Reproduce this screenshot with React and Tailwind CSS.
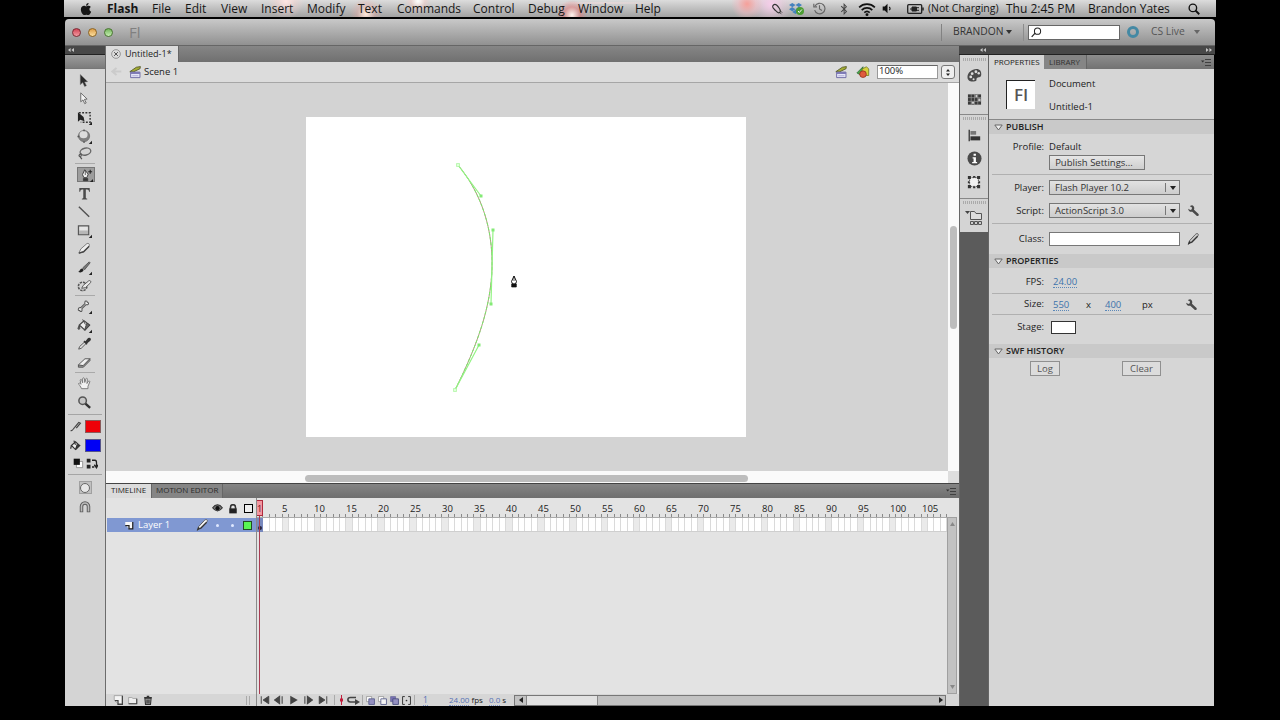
import React from "react";
import { FaApple, FaDropbox, FaBluetoothB } from "react-icons/fa";

const Ic = ({ s = 16, children, className = "" }) => (
  <svg width={s} height={s} viewBox="0 0 16 16" fill="none" className={"shrink-0 " + className}>
    {children}
  </svg>
);

/* ---------- shared icons ---------- */
const Clapper = () => (
  <Ic s={13}>
    <path d="M1 7 9 1.500l5-.8-.4 2.600L5 7.500z" fill="#a4ad35" stroke="#4d5320" strokeWidth="1" />
    <path d="M2 7.500h11.500v6.800H2z" fill="#e6e6f8" stroke="#6763a0" strokeWidth="1.100" />
    <path d="M2 7.400h11.500v2.400H2z" fill="#7d79b5" />
    <path d="M4 12h7.500" stroke="#a5a2d0" />
  </Ic>
);
const Symbols = () => (
  <Ic s={14}>
    <path d="M1 9 8 2v11z" fill="#46a84a" stroke="#22602a" strokeWidth=".8" />
    <path d="M7 4.500 12 2l2.500 2.500V12H7z" fill="#d5d03c" stroke="#667016" strokeWidth=".8" />
    <circle cx="8" cy="10.500" r="3.800" fill="#df5b3d" stroke="#8b2717" strokeWidth=".8" />
  </Ic>
);
const Wrench = () => (
  <Ic s={13}>
    <path d="M6.500 1.500a4.200 4.200 0 0 0-3 1.300l2.600 1.600-.2 2-1.800 1-2.600-1.700c0 3 2.500 4.400 5 3.700l5.700 5.300c1.600.8 3-.8 2-2.300L8.600 7.200c1-2.600 0-5-2.100-5.700z" fill="#4a4a4a" />
  </Ic>
);
const Pencil = ({ light }) => (
  <Ic s={14}>
    <path d="M2.500 14 4 10 10.500 3c1-1.300 2.800-1.700 3.400-.6.5 1-.1 2-1 3L6 12z" fill={light ? "#f4f4f4" : "#c9c9c9"} stroke={light ? "#555" : "#555"} strokeWidth="1" />
    <path d="M2 14.500 4 10l2 2z" fill="#333" />
    <path d="m6 12.200 7.300-7.400" stroke="#333" strokeWidth="1.500" />
  </Ic>
);
const MenuGlyph = () => (
  <svg width="10" height="7" viewBox="0 0 10 7" className="shrink-0">
    <path d="M0 1.500h3.400L1.700 3.600z" fill="#333" />
    <path d="M4 .5h6M4 3.500h6M4 6.500h6" stroke="#404040" strokeWidth="1" />
  </svg>
);
const Collapse = ({ flip }) => (
  <svg width="6" height="4" viewBox="0 0 6 4" className={flip ? "rotate-180" : ""}>
    <path d="M2.600 0v4L0 2zM6 0v4L3.400 2z" fill="#c8c8c8" />
  </svg>
);

/* ---------- toolbox ---------- */
const corner = <path d="M16 12.500V16h-3.500z" fill="#222" />;
const tools = [
  ["h-[18px]", <path d="M3.500 1.500v11l2.600-2.300 2 4.300 2-1-2-4 3.300-.3z" fill="#2a2a2a" stroke="#777" strokeWidth=".5" />],
  ["h-[19px]", <path d="M4 2v9.500l2.400-2 1.800 4 1.600-.8-1.900-3.800 2.900-.3z" fill="#f2f2f2" stroke="#666" strokeWidth="1" />],
  ["h-[19px]", <><path d="M1 2.500v10l2.500-2.200L8 12 7 7.500z" fill="#222" /><path d="M2 3h12v10H4" stroke="#333" strokeWidth="1.500" strokeDasharray="2 1.500" />{corner}</>],
  ["h-[18px]", <><circle cx="7.500" cy="7.500" r="6" fill="#808080" stroke="#666" strokeWidth=".7" /><ellipse cx="7" cy="6" rx="4.300" ry="3.800" fill="#dcdcdc" /><path d="M7.500 .5v2M7.500 13v2M.5 8h2" stroke="#555" strokeWidth="1.400" />{corner}</>],
  ["h-[17px]", <><ellipse cx="9" cy="6" rx="5.800" ry="3.700" transform="rotate(-14 9 6)" stroke="#666" strokeWidth="1.400" /><path d="M5 8.500c-2 0-3.300 1.200-2.600 2.200.8.9 2.600 0 2-1M3 11l2.200 3" stroke="#555" strokeWidth="1.300" /></>],
  ["sep"],
  ["h-[19px]", <><path d="M6.500 2 4 7.500 5.500 11h3.500L10.500 7z" fill="#eee" stroke="#333" strokeWidth="1" /><path d="M7.200 3v5M5 12h5v2.500H5z" fill="#333" stroke="#333" strokeWidth=".8" /><path d="M12.800 2v4.500M10.600 4.200H15" stroke="#222" strokeWidth="1.200" />{corner}</>, true],
  ["h-[18px]", <path d="M2.500 2h11l.3 4h-.9c-.3-1.600-.9-2.300-2.200-2.300H9.400v8.600c0 .9.400 1.100 1.500 1.200v.8H5.200v-.8c1.200-.1 1.500-.3 1.500-1.200V3.700H5.500c-1.300 0-1.800.7-2.100 2.300h-1z" fill="#4a4a4a" />],
  ["h-[19px]", <path d="m2 3 11 10.500" stroke="#505050" strokeWidth="1.500" />],
  ["h-[18px]", <><path d="M1.500 3h11v9.500h-11z" fill="#b7b7b7" stroke="#555" strokeWidth="1.200" /><path d="M2.500 4h9v4h-9z" fill="#e5e5e5" />{corner}</>],
  ["h-[19px]", <><path d="m2 13 2-4.500 6.500-5.700c1.500-1 3.500.6 2.500 2.400L7 11.500z" fill="#eee" stroke="#777" strokeWidth="1" /><path d="m2 13 5-1.500 6-6" stroke="#444" strokeWidth="1.500" /></>],
  ["h-[18px]", <><path d="m6 8.500 7-6.500 1 1-6 7.500z" fill="#777" stroke="#555" strokeWidth="1" /><path d="M1 12.500c2 0 2-3.500 4.500-3.500l1.500 1.500c0 2.500-3 3.500-6 2z" fill="#222" />{corner}</>],
  ["h-[18px]", <><circle cx="6" cy="9" r="4.500" stroke="#555" strokeWidth="1.700" strokeDasharray="2.500 1" /><path d="M5 11 6.500 8l6-5c1.500-.8 2.800.5 2 2L9 10.300z" fill="#e9e9e9" stroke="#555" strokeWidth="1" /></>],
  ["sep"],
  ["h-[19px]", <><path d="M1.500 10.500c-.7 1.500.8 2 1.500 1.700 0 1.400 2.200 1.700 2.300 0 .2-1-.2-1.400 0-2L9.700 6c1 .5 2.600.2 2.600-1.300 0-.8-.7-1.200-1.300-1.200 0-1.500-2.300-1.900-2.600-.3-.2.9.2 1.300 0 1.800L4 9.300c-.8-.4-2.200-.1-2.500 1.200z" fill="#efefef" stroke="#555" strokeWidth="1.100" />{corner}</>],
  ["h-[18px]", <><path d="m2.500 7.500 5-4.500 6 4.500-5 5.500z" fill="#ededed" stroke="#444" strokeWidth="1.200" /><path d="M6 1.500 9 7M2.500 7.500 1 11c0 1.500 2 1.500 2 0zM8 13l5.500-5.500-3-2z" fill="#666" stroke="#444" />{corner}</>],
  ["h-[19px]", <><path d="m1.800 14 1-2.800L8.500 6l1.600 1.600-5.600 5.500z" fill="#ddd" stroke="#555" /><path d="m7.500 5.500 3.200 3.300M9.500 6.500 12 3.200c1.200-1.400 2.700 0 1.600 1.300L10.500 7z" stroke="#333" strokeWidth="1.700" fill="#333" /></>],
  ["h-[18px]", <><path d="M1.500 10.500 8.500 4h5.300l-7 7.500H2z" fill="#efefef" stroke="#555" /><path d="M1.500 10.500V13h5.300l7-7V4L6.500 11.300z" fill="#999" stroke="#555" /></>],
  ["sep"],
  ["h-[19px]", <path d="M4.800 13.500C4 11 2 9.500 1.600 8c.6-.9 1.700-.3 2.600.8L3.400 4.500c.2-1.200 1.500-1 1.700 0L6 7.200 6 2.800c.2-1.200 1.700-1.200 1.900 0l.4 4.100L9.500 3c.5-1 1.700-.6 1.600.4L10.600 8l1.600-2.500c.8-.8 1.700-.1 1.400.9L11.700 11v2.500z" fill="#f1f1f1" stroke="#777" strokeWidth="1" />],
  ["h-[18px]", <><circle cx="6" cy="6" r="4" fill="#c6c6c6" stroke="#555" strokeWidth="1.600" /><path d="m9 9.200 5 4.500" stroke="#333" strokeWidth="2.600" /></>],
];

const Toolbox = () => (
  <div className="flex w-[41px] shrink-0 flex-col border-r border-[#6c6c6c] bg-[#d4d4d4]">
    <div className="flex h-[9px] items-center border-b border-[#222] bg-[#484848] pl-[3px]"><Collapse /></div>
    <div className="h-[14px] border-b border-[#777] bg-linear-to-b from-[#9c9c9c] to-[#7c7c7c]" />
    <div className="flex flex-col items-center pt-[2px]">
      {tools.map(([h, d, sel], i) =>
        h === "sep" ? (
          <div key={i} className="flex h-[3px] w-5 items-center"><div className="h-px w-full bg-[#a9a9a9]" /></div>
        ) : (
          <div key={i} className={"flex w-full items-center justify-center pr-px " + h}>
            {sel ? (
              <div className="ml-[2px] flex h-[15px] w-[18px] items-center justify-center border border-[#777] bg-[#9d9d9d]"><Ic s={14}>{d}</Ic></div>
            ) : (
              <Ic s={15}>{d}</Ic>
            )}
          </div>
        )
      )}
    </div>
    <div className="mx-[3px] mt-[3px] h-px bg-[#a5a5a5]" />
    <div className="flex h-[21px] items-center gap-[3px] pt-[2px] pl-[4px]">
      <Ic s={13}><path d="M2 13c2 1 4-3 5-4l5-6 2 1-5 6" stroke="#444" strokeWidth="1.500" /></Ic>
      <div className="h-[13px] w-[16px] border border-[#8a5a5a] bg-[#ee0008]" />
    </div>
    <div className="flex h-[19px] items-center gap-[3px] pl-[4px]">
      <Ic s={13}><path d="m3 8 5-4.500L13 8l-5 5z" fill="#eee" stroke="#333" strokeWidth="1.400" /><path d="M6 2l2 5M3 8l-1 4M8 13l5-5-3-1z" stroke="#333" strokeWidth="1.400" fill="#444" /></Ic>
      <div className="h-[13px] w-[16px] border border-[#55558a] bg-[#0000f5]" />
    </div>
    <div className="flex h-[17px] items-center gap-[2px] pl-[8px]">
      <Ic s={11}><path d="M5 5h9v9H5z" fill="#fff" stroke="#777" /><path d="M1 1h9v9H1z" fill="#111" /></Ic>
      <Ic s={12}><path d="M1 1h5v5H1zM1 9h5v5H1z" fill="#222" /><path d="M8 3h4c2 0 2 2 2 3v5M11 9l3 4 2-4M8 12h3" stroke="#222" strokeWidth="1.700" /></Ic>
    </div>
    <div className="mx-[3px] mt-[2px] h-px bg-[#a5a5a5]" />
    <div className="flex h-[25px] items-center justify-center">
      <div className="flex h-[13px] w-[13px] items-center justify-center border border-[#a0a0a0] bg-[#c0c0c0]">
        <div className="h-[10px] w-[10px] rounded-full border border-[#666] bg-[#e7e7e7]" />
      </div>
    </div>
    <div className="flex h-[13px] items-center justify-center pr-px">
      <Ic s={14}><path d="M4 14V7.500a4 4 0 0 1 8 0V14" stroke="#5c5c5c" strokeWidth="4" /><path d="M4 13V7.500a4 4 0 0 1 8 0V13" stroke="#bbb" strokeWidth="1.800" /></Ic>
    </div>
  </div>
);

/* ---------- mac menu bar ---------- */
const menus = [
  ["File", "w-[33px]"], ["Edit", "w-[36px]"], ["View", "w-[40px]"], ["Insert", "w-[46px]"], ["Modify", "w-[51px]"],
  ["Text", "w-[39px]"], ["Commands", "w-[76px]"], ["Control", "w-[55px]"], ["Debug", "w-[50px]"], ["Window", "w-[57px]"], ["Help", "w-[136px]"],
];
const MenuBar = () => (
  <div className="ml-[64px] flex h-[17px] w-[1152px] items-center overflow-hidden bg-[radial-gradient(circle_at_302px_14px,#ffe9dc_0,#f6a9a055_9px,transparent_16px),radial-gradient(circle_at_508px_15px,#fff4ee_0,#f0707077_8px,transparent_15px),radial-gradient(ellipse_at_540px_3px,#fff6_0,#ffdfe066_22px,transparent_60px),radial-gradient(circle_at_683px_4px,#f6a09a_0,#f4b9c088_9px,transparent_16px),radial-gradient(circle_at_707px_4px,#f6cdea_0,#f0c8e066_12px,transparent_22px),radial-gradient(circle_at_354px_1px,#fff_0,#ffc9c266_7px,transparent_13px),radial-gradient(circle_at_222px_1px,#ffe5e2_0,#ffd4d066_9px,transparent_18px),radial-gradient(ellipse_at_800px_12px,#eef6f0_0,#e4ece699_20px,transparent_34px),linear-gradient(#dcdcdc,#a2a2a2)] text-[12px] leading-[17px] whitespace-nowrap text-[#161616]">
    <div className="flex w-[43px] shrink-0 pl-[15px]"><FaApple size={14} /></div>
    <span className="w-[45px] shrink-0 font-bold">Flash</span>
    {menus.map(([t, w]) => <span key={t} className={"shrink-0 " + w}>{t}</span>)}
    <div className="flex w-[18px] shrink-0"><Ic s={12}><path d="M3 3c3-3 6 1 8 4s2 5 0 6-4-2-6-4-4-4-2-6z" stroke="#333" strokeWidth="1.500" /><path d="m11 12 3 3M12 10l3 3" stroke="#333" /></Ic></div>
    <div className="relative flex w-[24px] shrink-0"><FaDropbox size={13} color="#4382bd" />
      <span className="absolute top-[5px] left-[7px] flex h-2 w-2 items-center justify-center rounded-full bg-[#4c9d34]"><Ic s={6}><path d="m3 8 3 4 7-8" stroke="#fff" strokeWidth="2.500" /></Ic></span>
    </div>
    <div className="flex w-[25px] shrink-0"><Ic s={13}><path d="M2.500 5A6.500 6.500 0 1 1 2 10" stroke="#666" strokeWidth="1.400" /><path d="M1 2v4h4M8 4v4.500l3 2" stroke="#666" strokeWidth="1.400" /></Ic></div>
    <div className="flex w-[20px] shrink-0"><FaBluetoothB size={12} color="#444" /></div>
    <div className="flex w-[24px] shrink-0"><Ic s={18}><path d="M1 6.500a10 10 0 0 1 14 0M3.300 9a6.700 6.700 0 0 1 9.400 0M5.600 11.300a3.500 3.500 0 0 1 4.800 0" stroke="#111" strokeWidth="1.500" /><circle cx="8" cy="13" r="1.300" fill="#111" /></Ic></div>
    <div className="flex w-[25px] shrink-0"><Ic s={11}><path d="M1 5h3l4-4v14l-4-4H1z" fill="#111" /><path d="M10.500 5.500c1.500 1.500 1.500 3.500 0 5" stroke="#111" strokeWidth="1.500" /></Ic></div>
    <div className="flex w-[21px] shrink-0">
      <svg width="18" height="10" viewBox="0 0 18 10"><rect x=".7" y=".7" width="14" height="8.600" rx="1" fill="none" stroke="#222" strokeWidth="1.300" /><path d="M16 3.500v3" stroke="#222" strokeWidth="1.500" /><path d="M3 5h2V3h4.500v4H5V5M9 3.700h3M9 6.300h3" fill="#222" stroke="#222" /></svg>
    </div>
    <span className="w-[78px] shrink-0 text-[10.500px]">(Not Charging)</span>
    <span className="w-[82px] shrink-0">Thu 2:45 PM</span>
    <span className="w-[100px] shrink-0">Brandon Yates</span>
    <Ic s={12}><circle cx="6.500" cy="6.500" r="5" stroke="#111" strokeWidth="1.800" /><path d="m10 10 5 5" stroke="#111" strokeWidth="2.400" /></Ic>
  </div>
);

/* ---------- application title bar ---------- */
const TitleBar = () => (
  <div className="flex h-[27px] shrink-0 items-center rounded-t-[4px] border-b border-[#666] bg-linear-to-b from-[#c9c9c9] to-[#919191] pl-[7px] text-[#333]">
    <div className="flex w-[57px] gap-[7px]">
      <div className="h-[9px] w-[9px] rounded-full border border-[#7c2a33] bg-linear-to-b from-[#cf4156] to-[#f39aa2]" />
      <div className="h-[9px] w-[9px] rounded-full border border-[#8d6422] bg-linear-to-b from-[#dc9d45] to-[#fbe0a0]" />
      <div className="h-[9px] w-[9px] rounded-full border border-[#48752f] bg-linear-to-b from-[#72b45a] to-[#c8f0b4]" />
    </div>
    <span className="w-[812px] pb-[1px] text-[15px] leading-[16px] text-[#808080]">Fl</span>
    <div className="h-[17px] w-[12px] border-l border-[#828282]" />
    <span className="w-[53px] text-[10.300px] whitespace-nowrap">BRANDON</span>
    <svg width="6" height="4" viewBox="0 0 6 4"><path d="M0 0h6L3 4z" fill="#333" /></svg>
    <div className="ml-[11px] h-[17px] w-[5px] border-l border-[#8c8c8c]" />
    <div className="flex h-[15px] w-[92px] items-center border border-[#666] bg-white pl-[2px]">
      <Ic s={11}><circle cx="9.500" cy="6" r="4.500" stroke="#222" strokeWidth="1.500" /><path d="m6 9-5 5.500" stroke="#222" strokeWidth="1.700" /></Ic>
    </div>
    <div className="ml-[7px] h-[12px] w-[12px] rounded-full border-[3px] border-[#4489a4]" />
    <span className="ml-[12px] w-[43px] text-[10.300px] whitespace-nowrap text-[#555]">CS Live</span>
    <svg width="6" height="4" viewBox="0 0 6 4"><path d="M0 0h6L3 4z" fill="#666" /></svg>
  </div>
);

/* ---------- document window ---------- */
const DocumentView = () => (
  <>
    <div className="flex h-[16px] shrink-0 bg-linear-to-b from-[#868686] to-[#707070]">
      <div className="flex w-[73px] items-center gap-[4px] border-r border-[#666] bg-[#dcdcdc] pl-[5px] text-[9px] whitespace-nowrap">
        <Ic s={10}><circle cx="8" cy="8" r="7" stroke="#888" strokeWidth="1.300" /><path d="m5 5 6 6m0-6-6 6" stroke="#555" strokeWidth="1.600" /></Ic>
        Untitled-1*
      </div>
    </div>
    <div className="flex h-[21px] shrink-0 items-center border-b border-[#a6a6a6] bg-[#dcdcdc]">
      <div className="flex w-[23px] justify-center pr-[3px] pb-[1px]"><Ic s={11}><path d="M15 8H3m5-5L2 8l6 5" stroke="#cbcbcb" strokeWidth="3" /></Ic></div>
      <Clapper />
      <span className="ml-[2px] flex-1 text-[9.500px]">Scene 1</span>
      <Clapper />
      <div className="ml-[8px]"><Symbols /></div>
      <div className="ml-[7px] flex h-[14px] w-[61px] items-center border border-[#999] border-t-[#666] bg-white pb-[1px] pl-[1px] text-[9.500px]">100%</div>
      <div className="mr-[4px] ml-[3px] flex h-[14px] w-[14px] items-center justify-center rounded-[3px] border border-[#777] bg-[#efefef]">
        <svg width="4" height="7" viewBox="0 0 4 7"><path d="M0 2.500h4L2 0zM0 4.500h4L2 7z" fill="#222" /></svg>
      </div>
    </div>
    <div className="flex h-[388px] shrink-0">
      <div className="w-[842px] bg-[#d3d3d3] pt-[34px] pl-[200px]">
        <div className="h-[320px] w-[440px] bg-white">
          <svg width="440" height="320" viewBox="306 117 440 320" fill="none">
            <path d="M458 165C482 194 493 230 492 268S478 344 455 390" stroke="#b09a80" strokeWidth="1" />
            <path d="M458 165C482 194 493 230 492 268S478 344 455 390" stroke="#7be86a" strokeWidth="1" strokeDasharray="3 2" />
            <path d="m458 165 23 31M493 230l-2 74M455 390l24-45" stroke="#93f484" strokeWidth="1.200" />
            <path d="M479.500 194.500h3v3h-3zM491.500 228.500h3v3h-3zM489.500 302.500h3v3h-3zM477.500 343.500h3v3h-3z" fill="#84ea76" />
            <path d="M456.500 163.500h3v3h-3zM453.500 388.500h3v3h-3z" fill="#dfffd8" stroke="#a8f59c" strokeWidth=".7" />
            <path d="m514 276-2.500 5.500 1 2.500h3l1-2.500z" fill="#fff" stroke="#111" strokeWidth="1" />
            <path d="M514 276v5M511.700 284h4.600v3h-4.600z" fill="#111" stroke="#111" strokeWidth=".7" />
          </svg>
        </div>
      </div>
      <div className="w-[11px] bg-[#fafafa] pt-[143px] pl-[2px]"><div className="h-[103px] w-[7px] rounded-full bg-[#bdbdbd]" /></div>
    </div>
    <div className="flex h-[12px] shrink-0 bg-[#fafafa]">
      <div className="w-[842px] pt-[4px] pl-[199px]"><div className="h-[7px] w-[443px] rounded-full bg-[#bdbdbd]" /></div>
      <div className="flex-1 bg-[#dedede]" />
    </div>
  </>
);

/* ---------- timeline ---------- */
const frames = Array.from({ length: 108 }, (_, i) => i + 1);
const labels = Array.from({ length: 21 }, (_, i) => (i + 1) * 5);

const playback = [
  ["w-[14px]", <path d="M2 2v12M14 2v12L5 8z" fill="#444" stroke="#444" strokeWidth="1.500" />],
  ["w-[15px]", <path d="M9 2v12L1 8zM13 2v12" fill="#444" stroke="#444" strokeWidth="1.700" />],
  ["w-[14px]", <path d="M2 1v14l12-7z" fill="#444" />],
  ["w-[15px]", <path d="M7 2v12l8-6zM3 2v12" fill="#444" stroke="#444" strokeWidth="1.700" />],
  ["w-[16px]", <path d="M14 2v12M2 2v12l9-6z" fill="#444" stroke="#444" strokeWidth="1.500" />],
];

const Timeline = () => (
  <div className="flex flex-1 flex-col bg-[#e3e3e3]">
    <div className="flex h-[15px] shrink-0 items-stretch border-t border-[#444] bg-linear-to-b from-[#858585] to-[#6e6e6e] text-[8px] leading-[12px] whitespace-nowrap">
      <div className="w-[45px] bg-[#dcdcdc] pl-[5px]">TIMELINE</div>
      <div className="w-[72px] border-x border-[#666] bg-[#858585] pl-[4px] text-[#2b2b2b]">MOTION EDITOR</div>
      <div className="flex flex-1 items-center justify-end pr-[3px]"><MenuGlyph /></div>
    </div>
    <div className="flex h-[196px] shrink-0">
      <div className="w-[151px] shrink-0 border-r border-[#8a8a8a]">
        <div className="flex h-[20px] items-center pt-[1px] pl-[106px]">
          <div className="flex w-[16px]"><Ic s={11}><path d="M1 7c4-6 10-6 14 0-4 6-10 6-14 0z" fill="#777" stroke="#333" strokeWidth="1.500" /><circle cx="8" cy="7.500" r="3" fill="#111" /></Ic></div>
          <div className="flex w-[16px]"><Ic s={10}><path d="M2 7h12v8H2z" fill="#222" /><path d="M4 8V5a4 4 0 0 1 8 0v3" stroke="#333" strokeWidth="2.500" /></Ic></div>
          <div className="h-[9px] w-[9px] border-[1.500px] border-black bg-[#eee]" />
        </div>
        <div className="ml-[1px] flex h-[14px] items-center bg-[#8098d2] pl-[17px] text-white">
          <Ic s={10}><path d="M2 3h12v11H8L2 8z" fill="#f8f8f8" /><path d="M14 3v11H8V9H2" stroke="#222" strokeWidth="2" /></Ic>
          <span className="ml-[4px] w-[57px] text-[9.500px] leading-[14px] font-medium">Layer 1</span>
          <Pencil light />
          <div className="ml-[7px] h-[3px] w-[3px] rounded-full bg-[#dfe8ff]" />
          <div className="ml-[12px] h-[3px] w-[3px] rounded-full bg-[#dfe8ff]" />
          <div className="ml-[9px] h-[9px] w-[9px] border border-[#234b22] bg-[#58f552]" />
        </div>
      </div>
      <div className="relative w-[690px] shrink-0 overflow-hidden">
        <div className="flex h-[16px] pt-[3px] text-[9.500px] leading-[16px]">
          <span className="w-[25px] shrink-0" />
          {labels.map((n) => <span key={n} className="w-[32px] shrink-0">{n}</span>)}
        </div>
        <div className="flex h-[4px] border-b border-[#aaa]">
          {frames.map((n) => <div key={n} className="w-[6.400px] shrink-0 border-r border-[#8a8a8a]" />)}
        </div>
        <div className="flex h-[14px] border-b border-[#cfcfcf] bg-white">
          {frames.map((n) => <div key={n} className={"w-[6.400px] shrink-0 border-r border-[#dadada] " + (n % 5 === 0 ? "bg-[#eaeaea]" : "bg-white")} />)}
        </div>
        <div className="absolute top-[20px] left-0 flex h-[14px] w-[6px] items-end justify-center bg-[#7788bd] pb-[2px]"><div className="h-[4px] w-[4px] rounded-full bg-[#2b2440]" /></div>
        <div className="absolute top-[17px] left-[2px] h-[180px] w-px bg-[#a93c52]" />
        <div className="absolute top-[2px] left-[-1px] h-[16px] w-[7px] border border-[#b02a3e] bg-[#f58590]/80 text-center text-[9px] leading-[15px] text-[#701020]">1</div>
      </div>
      <div className="flex w-[10px] shrink-0 flex-col pt-[19px]">
        <div className="flex flex-1 flex-col items-center justify-between border border-[#a0a0a0] bg-[#c2c2c2] py-[4px]">
          <svg width="5" height="4" viewBox="0 0 5 4"><path d="M0 4h5L2.500 0z" fill="#888" /></svg>
          <svg width="5" height="4" viewBox="0 0 5 4"><path d="M0 0h5L2.500 4z" fill="#888" /></svg>
        </div>
      </div>
    </div>
    <div className="flex flex-1 items-center bg-[#d6d6d6] pb-[1px] text-[8.500px] leading-[12px] whitespace-nowrap">
      <div className="flex w-[140px] items-center gap-[5px] pl-[7px]">
        <Ic s={10}><path d="M2 1h13v13H8L2 8z" fill="#f4f4f4" stroke="#888" /><path d="M15 1v14H8V9H3" stroke="#444" strokeWidth="2" /></Ic>
        <Ic s={10}><path d="M1 4h5l2 1.500h6V14H1z" fill="#efefef" stroke="#888" /><path d="M1 14h13V6" stroke="#444" strokeWidth="1.700" /></Ic>
        <Ic s={10}><path d="M3 5h10l-1 10H4z" fill="#aaa" stroke="#333" strokeWidth="1.700" /><path d="M2 4h12M6 2h4M6.500 7v6M9.500 7v6" stroke="#333" strokeWidth="2" /></Ic>
      </div>
      <div className="h-[9px] w-[4px] border-x border-[#aaa]" />
      <div className="ml-[6px] h-full w-px bg-[#8a8a8a]" />
      <div className="flex items-center pl-[3px]">
        {playback.map(([w, d], i) => <div key={i} className={"flex shrink-0 " + w}><Ic s={10}>{d}</Ic></div>)}
        <div className="h-[10px] w-[5px] border-l border-[#aaa]" />
        <div className="flex w-[8px]"><svg width="5" height="10" viewBox="0 0 5 10"><path d="M2.500 0v10" stroke="#c11f3c" /><path d="M2.500 3.500v3" stroke="#c11f3c" strokeWidth="3" /></svg></div>
        <div className="flex w-[15px]"><svg width="13" height="9" viewBox="0 0 13 9"><path d="M9 1.500H3.500C0 1.500 0 6 3.500 6H9" fill="none" stroke="#444" strokeWidth="1.600" /><path d="M8 3v6l5-3z" fill="#444" /></svg></div>
        <div className="h-[10px] w-[4px] border-l border-[#aaa]" />
        <div className="flex w-[12px]"><Ic s={9}><path d="M1 1h9v9H1z" fill="#fff" stroke="#777" /><path d="M5 5h10v10H5z" fill="#9490c0" stroke="#555a88" strokeWidth="1.500" /></Ic></div>
        <div className="flex w-[12px]"><Ic s={9}><path d="M1 1h9v9H1z" fill="#fff" stroke="#777" /><path d="M5 5h10v10H5z" fill="#f4f4f4" stroke="#555a88" strokeWidth="1.500" /></Ic></div>
        <div className="flex w-[12px]"><Ic s={9}><path d="M1 1h9v9H1z" fill="#7a72b5" stroke="#555a88" /><path d="M5 5h10v10H5z" fill="#9490c0" stroke="#44497a" strokeWidth="1.500" /></Ic></div>
        <div className="flex w-[12px]"><Ic s={9}><path d="M5 1H1v14h4M11 1h4v14h-4" stroke="#333" strokeWidth="1.700" /><circle cx="8" cy="8" r="1.500" fill="#333" /></Ic></div>
        <div className="h-[10px] w-[9px] border-l border-[#aaa]" />
        <span className="w-[26px] text-[#5571b5]"><span className="border-b border-dotted border-[#7f95c8] leading-[9px]">1</span></span>
        <span className="w-[40px] text-[8px]"><span className="border-b border-dotted border-[#7f95c8] text-[#5571b5]">24.00</span> fps</span>
        <span className="text-[8px]"><span className="border-b border-dotted border-[#7f95c8] text-[#5571b5]">0.0</span> s</span>
      </div>
      <div className="mr-[13px] ml-auto flex h-[11px] w-[432px] border border-[#777] bg-[#c2c2c2]">
        <div className="flex w-[12px] items-center justify-center border-r border-[#888]"><svg width="4" height="6" viewBox="0 0 4 6"><path d="M4 0v6L0 3z" fill="#222" /></svg></div>
        <div className="w-[71px] border-r border-[#888] bg-[#e2e2e2]" />
        <div className="flex flex-1 items-center justify-end pr-[2px]"><svg width="4" height="6" viewBox="0 0 4 6"><path d="M0 0v6l4-3z" fill="#222" /></svg></div>
      </div>
    </div>
  </div>
);

/* ---------- icon dock ---------- */
const Grip = () => (
  <div className="mx-auto h-[3px] w-[23px] shrink-0 bg-[repeating-linear-gradient(90deg,#aaa_0_1px,transparent_1px_2px)]" />
);
const Dock = () => (
  <div className="flex w-[30px] shrink-0 flex-col border-x border-[#666] bg-[#5b5b5b]">
    <div className="flex h-[60px] flex-col items-center border-b border-[#888] bg-[#d4d4d4] pt-[3px]">
      <Grip />
      <div className="flex h-[29px] items-center"><Ic s={15}><path d="M10 1C5 1 .5 5 .5 9.500s4 5.500 8 4.500c3 0 .5-2.500 2.500-3.500s4 0 4.200-3.500S14 1 10 1z" fill="#4a4a4a" /><circle cx="9.500" cy="4" r="1.500" fill="#ddd" /><circle cx="5.500" cy="6" r="1.500" fill="#ddd" /><circle cx="4" cy="9.500" r="1.500" fill="#ddd" /><circle cx="12.500" cy="5.500" r="1.300" fill="#ddd" /><circle cx="7" cy="12" r="1.100" fill="#ddd" /></Ic></div>
      <div className="flex h-[18px] items-center"><Ic s={15}><path d="M1 2.500h14v11H1z" fill="#3a3a3a" /><path d="M1 6h14M1 10h14M4.500 2v12M8 2v12M11.500 2v12" stroke="#999" strokeWidth=".7" /><path d="M9 3h2v2.500H9zM12 7h2.500v2.500H12zM5 10.500h2.500v2H5z" fill="#ccc" /></Ic></div>
    </div>
    <div className="flex h-[84px] flex-col items-center border-b border-[#888] bg-[#d4d4d4]">
      <div className="h-[2px]" />
      <Grip />
      <div className="flex h-[26px] items-center pt-[5px]"><Ic s={13}><path d="M1.500 1v14" stroke="#333" strokeWidth="1.600" /><path d="M3 2.500h7v4.500H3z" fill="#777" /><path d="M3 9h12v5H3z" fill="#333" /></Ic></div>
      <div className="flex h-[24px] items-center"><Ic s={15}><circle cx="8" cy="8" r="7.500" fill="#4a4a4a" /><path d="M7 3h2.500v2H7zM6 6.700h3.500v5h1.300V13H5.500v-1.300H7V8H6z" fill="#fff" /></Ic></div>
      <div className="flex h-[24px] items-center"><Ic s={14}><path d="M3 3h10v10H3z" fill="#f2f2f2" stroke="#444" strokeDasharray="2 1" /><path d="M1 1h3.500v3.500H1zM11.500 1H15v3.500h-3.500zM1 11.500h3.500V15H1zM11.500 11.500H15V15h-3.500zM7 1h2.500v2H7zM7 13h2.500v2H7zM1 7h2v2.500H1zM13 7h2v2.500h-2z" fill="#333" /></Ic></div>
    </div>
    <div className="flex h-[33px] flex-col items-center bg-[#d4d4d4]">
      <div className="h-[2px]" />
      <Grip />
      <svg width="18" height="16" viewBox="0 0 18 16" className="mt-[6px]"><path d="M0 1h5L2.500 4z" fill="#444" /><path d="M5.500 9.500v-8h4l1.500 2h5.500v6z" fill="#ddd" stroke="#555" /><path d="M5.500 11.500h3v3h-3zM9.500 11.500h3v3h-3zM13.500 11.500h3v3h-3z" stroke="#555" fill="#ccc" /></svg>
    </div>
  </div>
);

/* ---------- properties panel ---------- */
const Section = ({ children }) => (
  <div className="flex h-[14px] shrink-0 items-center bg-[#c9c9c9] pb-[1px] pl-[5px] text-[9px] font-semibold text-[#222]">
    <svg width="9" height="7" viewBox="0 0 9 7" className="mt-[2px] mr-[3px]"><path d="M.8 1h7.400L4.500 6z" fill="#eee" stroke="#666" /></svg>
    {children}
  </div>
);
const Label = ({ children }) => <span className="mr-[5px] w-[55px] shrink-0 pb-[1px] text-right">{children}</span>;
const Select = ({ children }) => (
  <div className="flex h-[15px] w-[131px] items-center border border-[#777] bg-linear-to-b from-[#e2e2e2] to-[#cdcdcd] pl-[5px] text-[#333]">
    <span className="flex-1 pb-[1px]">{children}</span>
    <div className="flex h-[9px] w-[14px] items-center justify-center border-l border-[#777]"><svg width="6" height="4" viewBox="0 0 6 4"><path d="M0 0h6L3 4z" fill="#222" /></svg></div>
  </div>
);
const Hot = ({ children, className = "" }) => (
  <span className={"shrink-0 " + className}><span className="inline-block border-b border-dotted border-[#5b88b8] leading-[10px] text-[#3d73ab]">{children}</span></span>
);
const Rule = () => <div className="mr-[2px] ml-[3px] h-px shrink-0 bg-[#b0b0b0]" />;

const Properties = () => (
  <div className="flex w-[225px] shrink-0 flex-col bg-[#d6d6d6] text-[9.500px] leading-[13px] whitespace-nowrap text-[#222]">
    <div className="flex h-[14px] shrink-0 bg-linear-to-b from-[#8e8e8e] to-[#727272] text-[8px] leading-[14px]">
      <div className="w-[55px] bg-[#d6d6d6] pl-[5px]">PROPERTIES</div>
      <div className="w-[43px] border-r border-[#666] bg-[#858585] pl-[5px] text-[#333]">LIBRARY</div>
      <div className="flex flex-1 items-center justify-end pr-[3px]"><MenuGlyph /></div>
    </div>
    <div className="flex h-[51px] shrink-0 border-b border-[#888] pl-[17px]">
      <div className="mt-[11px] flex h-[29px] w-[29px] items-center justify-center border-t border-l border-[#222] bg-white pb-[2px] text-[17px] font-semibold text-[#555]">Fl</div>
      <div className="ml-[14px] flex flex-col gap-[10px] pt-[8px]"><span>Document</span><span>Untitled-1</span></div>
    </div>
    <Section>PUBLISH</Section>
    <div className="h-[40px] shrink-0 pt-[5px]">
      <div className="flex h-[16px] items-center"><Label>Profile:</Label><span className="pb-[1px]">Default</span></div>
      <div className="ml-[60px] flex h-[15px] w-[96px] items-center justify-center border border-[#777] bg-linear-to-b from-[#e6e6e6] to-[#cecece] pr-[6px] pb-[1px] text-[#333]">Publish Settings...</div>
    </div>
    <Rule />
    <div className="h-[48px] shrink-0 pt-[5px]">
      <div className="flex h-[15px] items-center"><Label>Player:</Label><Select>Flash Player 10.2</Select></div>
      <div className="mt-[8px] flex h-[15px] items-center"><Label>Script:</Label><Select>ActionScript 3.0</Select><div className="ml-[7px]"><Wrench /></div></div>
    </div>
    <Rule />
    <div className="h-[30px] shrink-0 pt-[8px]">
      <div className="flex h-[14px] items-center"><Label>Class:</Label><div className="h-[14px] w-[131px] border border-[#777] bg-white" /><div className="ml-[6px]"><Pencil /></div></div>
    </div>
    <Section>PROPERTIES</Section>
    <div className="flex h-[25px] shrink-0 items-center pt-[2px]"><Label>FPS:</Label><Hot className="pl-[4px]">24.00</Hot></div>
    <Rule />
    <div className="flex h-[20px] shrink-0 items-center">
      <Label>Size:</Label><Hot className="w-[37px] pl-[4px]">550</Hot><span className="w-[19px]">x</span><Hot className="w-[37px]">400</Hot><span className="w-[43px]">px</span><Wrench />
    </div>
    <Rule />
    <div className="flex h-[29px] shrink-0 items-center pb-[5px]"><Label>Stage:</Label><div className="ml-[2px] h-[13px] w-[25px] border border-[#333] bg-white" /></div>
    <Section>SWF HISTORY</Section>
    <div className="flex pt-[3px] pl-[41px] text-[#555]">
      <div className="flex h-[15px] w-[30px] items-center justify-center border border-[#909090] bg-[#dcdcdc]">Log</div>
      <div className="ml-[62px] flex h-[15px] w-[39px] items-center justify-center border border-[#909090] bg-[#dcdcdc]">Clear</div>
    </div>
  </div>
);

export default function App() {
  return (
    <div className="flex h-[720px] w-[1280px] flex-col overflow-hidden bg-black font-['Open_Sans','Noto_Sans',sans-serif] text-[#1c1c1c]">
      <MenuBar />
      <div className="mt-[2px] ml-[65px] flex h-[687px] w-[1150px] flex-col overflow-hidden">
        <TitleBar />
        <div className="flex min-h-0 flex-1">
          <Toolbox />
          <div className="flex w-[853px] shrink-0 flex-col">
            <DocumentView />
            <Timeline />
          </div>
          <div className="flex flex-1 flex-col">
            <div className="flex h-[9px] shrink-0 items-center justify-between border-b border-[#222] bg-[#484848] pr-[3px] pl-[21px]"><Collapse /><Collapse flip /></div>
            <div className="flex min-h-0 flex-1">
              <Dock />
              <Properties />
            </div>
          </div>
        </div>
      </div>
      <div className="flex h-[14px] bg-[radial-gradient(ellipse_at_552px_6px,#333_0,transparent_24px),radial-gradient(ellipse_at_900px_6px,#3a0510_0,transparent_22px)]" />
    </div>
  );
}
